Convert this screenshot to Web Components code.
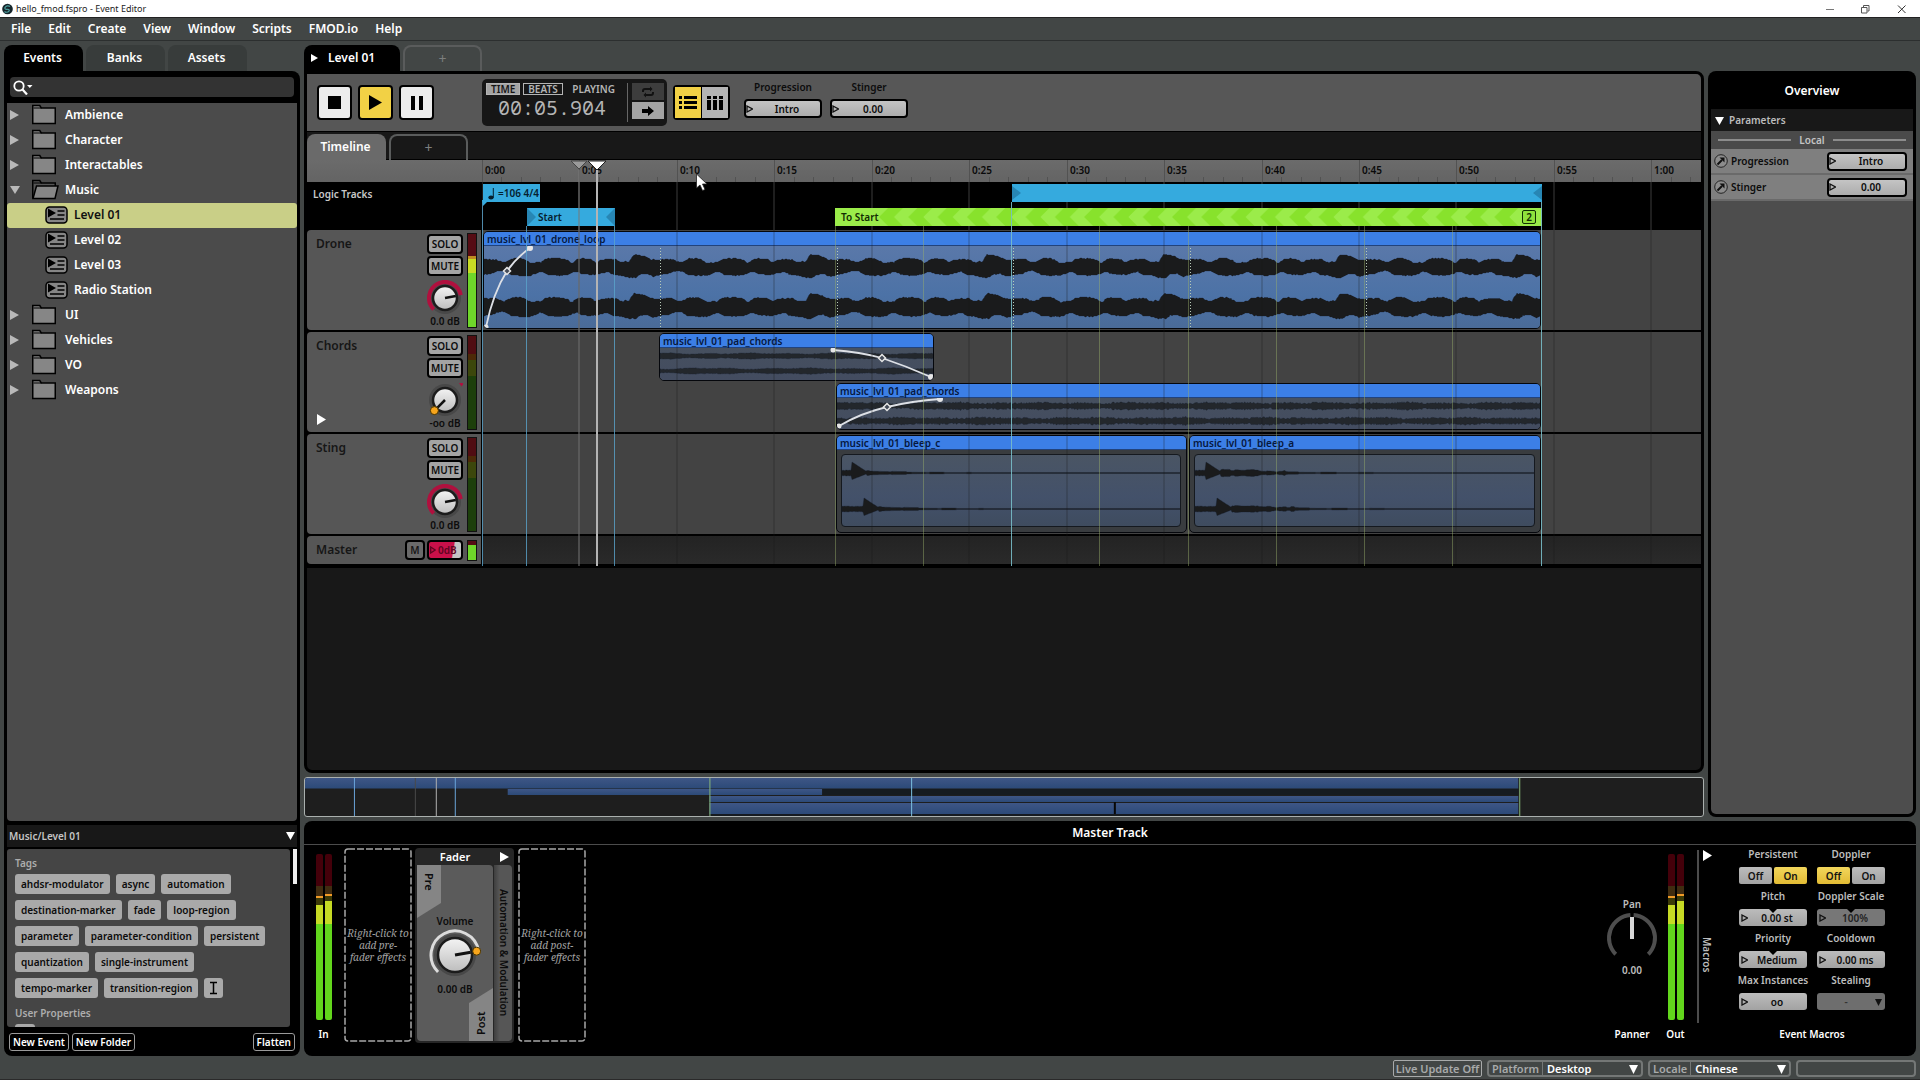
<!DOCTYPE html>
<html lang="en">
<head>
<meta charset="utf-8">
<title>hello_fmod.fspro - Event Editor</title>
<style>
  html, body { margin: 0; height: 100%; }
  body {
    background: #424645; color: #fff; overflow: hidden;
    font: 600 10px/16px "Noto Sans", "Open Sans", sans-serif;
    --black: #000; --panel: #4b4b4b; --bar: #181818; --clip: #3c7fe6; --marker: #35aade; --gold: #f2d145;
  }
</style>
</head>
<body>
<fm-app></fm-app>
<script>
const base = `
  *, *::before, *::after { box-sizing: border-box; }
  :host { display: block; box-sizing: border-box; }
  button, input, select { font: inherit; color: inherit; margin: 0; padding: 0; border: 0; background: none; border-radius: 0; appearance: none; min-width: 0; white-space: nowrap; }
  svg { display: block; }
  a { color: inherit; text-decoration: none; }
`;
function define(name, css, render, init) {
  customElements.define(name, class extends HTMLElement {
    connectedCallback() {
      if (this.shadowRoot) return;
      const root = this.attachShadow({ mode: 'open' });
      const t = document.createElement('template');
      t.innerHTML = `<style>${base}${css}</style>${render(k => this.getAttribute(k) ?? '', this)}`;
      root.append(t.content.cloneNode(true));
      if (init) init(this, root);
    }
  });
}
const range = n => Array.from({ length: n }, (_, i) => i);
const noise = i => { const v = Math.sin(i * 127.1 + 11.7) * 43758.5453; return v - Math.floor(v); };

/* ---------- window chrome ---------- */
define('fm-titlebar', `
  :host { display: flex; align-items: center; height: 18px; background: #fff; border-bottom: 1px solid #222; color: #222; padding: 0 14px 0 2px; font: 400 9px/16px "Noto Sans", "Open Sans", sans-serif; }
  .name { margin-left: 3px; flex: 1; }
  nav { display: flex; gap: 27px; }
  nav button { width: 9px; height: 10px; }
`, () => `
  <svg width="11" height="12" viewBox="0 0 11 12"><circle cx="5.500" cy="6" r="5.300" fill="#16252b"/><path d="M8 3.500a3.400 3.400 0 0 0-5 1c-.6 1.600.6 2 2.300 1.800s2.500.8 1.500 2S3.500 9.500 2.500 8.500" fill="none" stroke="#4ea0a0" stroke-width="1.200"/></svg>
  <span class="name">hello_fmod.fspro - Event Editor</span>
  <nav>
    <button aria-label="Minimize"><svg width="9" height="10"><path d="M1 5.500h8" stroke="#777"/></svg></button>
    <button aria-label="Restore"><svg width="9" height="10" fill="none" stroke="#555"><path d="M.5 3.500h5.500v5.500H.5zM2.500 3V1.500H8V7H6.500"/></svg></button>
    <button aria-label="Close"><svg width="9" height="10"><path d="M1 1.500l7.500 7.500M8.500 1.500L1 9" stroke="#333"/></svg></button>
  </nav>`);

define('fm-menubar', `
  :host { display: flex; gap: 17px; align-items: center; height: 23px; padding: 0 11px; border-bottom: 1px solid #2c2f2f; font-size: 12px; }
`, () => ['File', 'Edit', 'Create', 'View', 'Window', 'Scripts', 'FMOD.io', 'Help'].map(t => `<button>${t}</button>`).join(''));

define('fm-tab', `
  :host { flex: none; width: 79px; height: 26px; font-size: 12px; }
  button { display: flex; width: 100%; height: 100%; align-items: center; justify-content: center; gap: 10px; padding-right: 2px; border-radius: 8px 8px 0 0; background: #383c3b; }
  :host([kind=on]) button { background: #000; }
  :host([doc]) button { justify-content: flex-start; padding-left: 7px; }
  :host([kind=gray]) button { background: #6a6a6a; }
  :host([kind=add]) button { background: none; border: 2px solid #5a5c5c; border-bottom: 0; padding-right: 0; color: #7c7e7e; font-weight: 400; font-size: 14px; }
`, () => `<button><slot></slot></button>`);

/* ---------- event browser ---------- */
const folder = `<svg width="24" height="21" viewBox="0 0 24 21"><path d="M.75 19.500V1.500h7l1.500 2.500H23.250V19.500z" fill="#868686" stroke="#000" stroke-width="1.500"/><path d="M1.500 4h8" stroke="#000"/></svg>`;
const folderOpen = `<svg width="27" height="21" viewBox="0 0 27 21"><path d="M.75 19.500V1.500h7l1.500 2.500H23.250v4" fill="#555" stroke="#000" stroke-width="1.500"/><path d="M1.500 4h8" stroke="#000"/><path d="M1 19.500L4.500 7H26l-3 12.500z" fill="#868686" stroke="#000" stroke-width="1.500"/></svg>`;
const eventIcon = `<svg width="23" height="18" viewBox="0 0 23 18"><rect x="1" y="1" width="21" height="16" rx="3.500" fill="#868686" stroke="#000" stroke-width="1.500"/><path d="M3 2.500l8 4.500-8 4.500z"/><path d="M12.500 5h7M12.500 9h7M5 13h14" stroke="#000" stroke-width="1.500"/></svg>`;
define('fm-tree-row', `
  :host { display: flex; align-items: center; height: 25px; padding-left: 3px; font-size: 12px; }
  button { display: flex; align-items: center; height: 100%; width: 100%; text-align: left; padding-bottom: 2px; }
  .arrow { width: 22px; }
  .icon { width: 33px; }
  :host([leaf]) .arrow { width: 35px; }
  :host([leaf]) .icon { width: 29px; }
  :host([selected]) { background: #c9cf87; color: #111; border-radius: 3px; }
`, (a, el) => `<button><span class="arrow">${el.hasAttribute('leaf') ? '' : el.hasAttribute('open')
    ? '<svg width="10" height="9"><path d="M0 1h10L5 9z" fill="#b9b9b9"/></svg>'
    : '<svg width="9" height="10"><path d="M0 0l9 5-9 5z" fill="#b9b9b9"/></svg>'}</span>
  <span class="icon">${el.hasAttribute('leaf') ? eventIcon : el.hasAttribute('open') ? folderOpen : folder}</span><slot></slot></button>`);

define('fm-tag', `
  :host { height: 20px; padding: 0 6px; border-radius: 3px; background: #a9a9a9; color: #0c0c0c; line-height: 20px; }
`, () => `<slot></slot>`);

define('fm-browser', `
  :host { display: flex; flex-direction: column; width: 296px; flex: none; }
  .tabs { display: flex; gap: 3px; }
  .panel { flex: 1; min-height: 0; display: flex; flex-direction: column; background: #000; border-radius: 0 8px 8px 8px; padding: 6px 3px 5px; }
  .search { display: flex; align-items: center; gap: 6px; height: 20px; margin: 0 3px; padding: 0 3px; border-radius: 4px; background: #333; flex: none; }
  .search input { flex: 1; height: 100%; }
  .tree { flex: 1; min-height: 0; margin: 6px 0 4px; background: var(--panel); border-radius: 0 0 4px 4px; }
  .head { display: flex; justify-content: space-between; align-items: center; height: 22px; flex: none; padding: 0 2px; background: var(--bar); color: #c4c4c4; }
  .detail { display: flex; height: 178px; margin-top: 2px; overflow: hidden; flex: none; }
  .scroll { flex: 1; padding: 6px 8px 0; background: #454545; border-radius: 3px; color: #adadad; }
  .tags { display: flex; flex-wrap: wrap; gap: 6px; margin: 3px 16px 7px 0; }
  .thumb { width: 4px; height: 35px; margin-left: 3px; background: #eee; }
  .foot { display: flex; gap: 3px; margin: 6px 2px 0; flex: none; }
  .foot button { height: 18px; padding: 0 3px; border: 1px solid #9a9a9a; border-radius: 3px; line-height: 14px; }
  .foot .last { margin-left: auto; }
  h3 { margin: 0; font: inherit; }
  .stub { width: 20px; height: 20px; border-radius: 3px; background: #a9a9a9; margin-top: 3px; }
`, () => `
  <div class="tabs"><fm-tab kind="on">Events</fm-tab><fm-tab>Banks</fm-tab><fm-tab>Assets</fm-tab></div>
  <div class="panel">
    <div class="search"><label for="q" aria-label="Search"><svg width="20" height="15" viewBox="0 0 20 15"><circle cx="6" cy="6" r="4.700" fill="none" stroke="#fff" stroke-width="1.800"/><path d="M9.500 9.500l4.500 5" stroke="#fff" stroke-width="2.200"/><path d="M14 5h5.500l-2.700 3z" fill="#fff"/></svg></label><input id="q" type="text"></div>
    <div class="tree">
      <fm-tree-row>Ambience</fm-tree-row><fm-tree-row>Character</fm-tree-row><fm-tree-row>Interactables</fm-tree-row>
      <fm-tree-row open>Music</fm-tree-row>
      <fm-tree-row leaf selected>Level 01</fm-tree-row><fm-tree-row leaf>Level 02</fm-tree-row><fm-tree-row leaf>Level 03</fm-tree-row><fm-tree-row leaf>Radio Station</fm-tree-row>
      <fm-tree-row>UI</fm-tree-row><fm-tree-row>Vehicles</fm-tree-row><fm-tree-row>VO</fm-tree-row><fm-tree-row>Weapons</fm-tree-row>
    </div>
    <div class="head"><span>Music/Level 01</span><svg width="9" height="9"><path d="M0 0h9L4.500 8z" fill="#fff"/></svg></div>
    <div class="detail">
      <div class="scroll">
        <h3>Tags</h3>
        <div class="tags">${['ahdsr-modulator', 'async', 'automation', 'destination-marker', 'fade', 'loop-region', 'parameter', 'parameter-condition', 'persistent', 'quantization', 'single-instrument', 'tempo-marker', 'transition-region'].map(t => `<fm-tag>${t}</fm-tag>`).join('')}<fm-tag><svg width="7" height="20" viewBox="0 0 7 20" fill="none" stroke="#000" stroke-width="1.500"><path d="M0 4.500h7M0 15.500h7M3.500 4.500v11"/></svg></fm-tag></div>
        <h3>User Properties</h3>
        <div class="stub"></div>
      </div>
      <div class="thumb"></div>
    </div>
    <div class="foot"><button>New Event</button><button>New Folder</button><button class="last">Flatten</button></div>
  </div>`);

/* ---------- controls ---------- */
define('fm-field', `
  :host { display: flex; flex-direction: column; align-items: center; }
  label { line-height: 16px; white-space: nowrap; }
  .box { position: relative; width: 100%; color: #0c0c0c; }
  input { display: block; width: 100%; height: 19px; padding: 0 0 0 8px; text-align: center; border: 2px solid #000; border-radius: 4px; background: linear-gradient(#c4c4c4, #acacac); }
  svg { position: absolute; left: 2px; top: 50%; margin-top: -4px; }
  .notch { position: absolute; left: 50%; margin-left: -4px; top: 0; border: solid transparent; border-width: 4px 4px 0; border-top-color: #000; }
  :host([row]) { flex-direction: row; }
  :host([row]) label { flex: 1; }
  :host([row]) .box { width: 80px; }
  :host([deck]) label { color: #bdbdbd; margin-bottom: 5px; line-height: 16px; }
  :host([deck]) input { height: 17px; border: 0; border-radius: 3px; background: linear-gradient(#bcbcbc, #a2a2a2); }
  :host([disabled]) input { background: #777 !important; color: #222; }
`, (a, el) => `<label for="f">${a('label')}</label><div class="box"><input id="f" type="text" value="${a('value')}"><svg width="7" height="8"><path d="M1 1l5.500 3L1 7z" fill="none" stroke="#111" stroke-width="1.300"/></svg>${el.hasAttribute('notch') ? '<i class="notch"></i>' : ''}</div>`);

const polar = (c, r, deg) => { const t = (deg - 90) * Math.PI / 180; return [(c + r * Math.cos(t)).toFixed(2), (c + r * Math.sin(t)).toFixed(2)]; };
const arc = (c, r, a, b) => { const p = polar(c, r, a), q = polar(c, r, b); return `M${p}A${r} ${r} 0 ${b - a > 180 ? 1 : 0} 1 ${q}`; };
define('fm-knob', ``, a => {
  const big = a('size') === 'big', c = big ? 26 : 18, r = big ? 17 : 12, ar = big ? 24 : 16, v = +a('angle');
  const uid = big ? 'kb' : 'ks';
  return `<svg width="${2 * c}" height="${2 * c}" role="img" aria-label="knob">
    <defs><linearGradient id="${uid}" x2="0" y2="1"><stop stop-color="#f4f4f4"/><stop offset="1" stop-color="#bdbdbd"/></linearGradient></defs>
    <circle cx="${c}" cy="${c}" r="${r + 4}" fill="#484848"/>
    ${v > -135 ? `<path d="${arc(c, ar, -135, v)}" fill="none" stroke="${a('arc')}" stroke-width="${big ? 3 : 4}"/>` : `<path d="M32 1h5l-2.500 3.500z" fill="#b0103e"/>`}
    <circle cx="${c}" cy="${c}" r="${r}" fill="url(#${uid})" stroke="#1c1c1c" stroke-width="2.500"/>
    <path d="M${c} ${c}L${polar(c, r - 1, v)}" stroke="#111" stroke-width="${big ? 3 : 2.5}"/>
    ${a('dot') ? `<circle cx="${polar(c, big ? 22 : 15, v)[0]}" cy="${polar(c, big ? 22 : 15, v)[1]}" r="4" fill="#f7a51c" stroke="#4a3500"/>` : ''}
  </svg>`;
});

/* A column of coloured bands; each band is "colour height", the last one takes the rest. */
define('fm-meter', `
  :host { display: flex; flex-direction: column; width: 8px; outline: 1px solid #111; }
  i:last-child { flex: 1; }
`, a => a('bands').split(',').map(b => { const [c, h] = b.trim().split(' '); return `<i style="background:${c};${h ? `height:${h}px` : ''}"></i>`; }).join(''));

/* ---------- transport ---------- */
define('fm-transport', `
  :host { display: flex; align-items: flex-start; height: 58px; padding: 5px 10px 0; background: #575757; border-bottom: 1px solid #000; color: #0c0c0c; }
  .play { display: flex; gap: 6px; margin-top: 6px; }
  .play button { width: 35px; height: 35px; border: 2px solid #000; border-radius: 4px; background: #ececec; display: grid; place-items: center; }
  .play .on, .view .on { background: var(--gold); }
  .clock { display: flex; width: 185px; height: 47px; margin-left: 48px; padding: 4px 3px 0 4px; border-radius: 5px; background: #161616; color: #b4b4b4; }
  .read { flex: 1; }
  .modes { display: flex; gap: 3px; align-items: center; }
  .modes button { height: 12px; padding: 0 4px; line-height: 10px; border: 1px solid #b4b4b4; }
  .modes .on { background: #a4a4a4; color: #161616; }
  .modes span { margin-left: auto; padding-right: 12px; line-height: 12px; }
  .time { margin-left: 12px; font: 400 20px/26px "Noto Sans Mono", "Liberation Mono", monospace; }
  .side { display: flex; flex-direction: column; gap: 2px; padding-left: 4px; border-left: 1px solid #666; height: 39px; }
  .side button { width: 32px; height: 17px; background: #a4a4a4; display: grid; place-items: center; }
  .side button:first-child { background: #3d3d3d; }
  .view { display: flex; margin: 6px 14px 0 6px; border: 2px solid #000; border-radius: 4px; background: #000; gap: 1px; }
  .view button { width: 26px; height: 31px; background: #b4b4b4; display: grid; place-items: center; }
  fm-field { width: 78px; margin-right: 8px; gap: 4px; }
`, () => `
  <div class="play">
    <button aria-label="Stop"><svg width="13" height="13"><path d="M0 0h13v13H0z"/></svg></button>
    <button class="on" aria-label="Play"><svg width="13" height="15"><path d="M0 0l13 7.500L0 15z"/></svg></button>
    <button aria-label="Pause"><svg width="12" height="14"><path d="M0 0h4v14H0zM8 0h4v14H8z"/></svg></button>
  </div>
  <div class="clock">
    <div class="read">
      <div class="modes"><button class="on">TIME</button><button>BEATS</button><span>PLAYING</span></div>
      <div class="time">00:05.904</div>
    </div>
    <div class="side">
      <button aria-label="Loop"><svg width="12" height="12" fill="none" stroke="#111" stroke-width="2"><path d="M1 6V5q0-2 2-2h6M11 6v1q0 2-2 2H3"/><path d="M8 .5L10.500 3 8 5.500zM4 6.500L1.500 9 4 11.500z" fill="#111" stroke="none"/></svg></button>
      <button aria-label="Follow"><svg width="12" height="10"><path d="M0 3h6V0l6 5-6 5V7H0z"/></svg></button>
    </div>
  </div>
  <div class="view">
    <button class="on" aria-label="List view"><svg width="18" height="13"><path d="M0 0h3v3H0zM5 0h13v3H5zM0 5h3v3H0zM5 5h13v3H5zM0 10h3v3H0zM5 10h13v3H5z"/></svg></button>
    <button aria-label="Mixer view"><svg width="16" height="14"><path d="M0 0h4v3H0zM6 0h4v3H6zM12 0h4v3h-4zM0 4h4v10H0zM6 4h4v10H6zM12 4h4v10h-4z"/></svg></button>
  </div>
  <fm-field label="Progression" value="Intro"></fm-field>
  <fm-field label="Stinger" value="0.00"></fm-field>`);

/* ---------- tracks ---------- */
define('fm-track-head', `
  :host { display: flex; height: 100px; padding: 4px 5px 3px 9px; background: #565656; color: #0c0c0c; border-radius: 4px 0 0 4px; margin-bottom: 2px; flex: none; }
  .name { flex: 1; display: flex; flex-direction: column; justify-content: space-between; line-height: 20px; color: #161616; font-size: 12px; }
  .name svg { margin: 0 0 4px 1px; }
  .ctl { width: 36px; display: flex; flex-direction: column; gap: 2px; align-items: center; }
  .ctl button { width: 36px; height: 20px; border: 2px solid #000; border-radius: 4px; background: #a4a4a4; line-height: 14px; }
  .db { line-height: 12px; margin-top: -3px; white-space: nowrap; }
  fm-knob { margin-top: 2px; }
  fm-meter { margin-left: 5px; }
`, (a, el) => `
  <div class="name">${a('name')}${el.hasAttribute('fold') ? '<svg width="9" height="11"><path d="M0 0l9 5.500L0 11z" fill="#fff"/></svg>' : ''}</div>
  <div class="ctl"><button>SOLO</button><button>MUTE</button><fm-knob angle="${a('angle')}" arc="#b0103e" dot="${a('dot')}"></fm-knob><span class="db">${a('db')}</span></div>
  <fm-meter bands="${a('bands')}"></fm-meter>`);

define('fm-master-head', `
  :host { display: flex; align-items: center; gap: 2px; height: 28px; padding: 0 5px 0 9px; background: #565656; border-radius: 4px 0 0 4px; color: #161616; }
  .name { flex: 1; font-size: 12px; }
  button { width: 20px; height: 20px; border: 2px solid #000; border-radius: 4px; background: #6a6a6a; line-height: 14px; }
  .vol { display: flex; align-items: center; gap: 2px; padding-left: 1px; width: 36px; color: #5c0520; background: linear-gradient(100deg, #c9104a 72%, #c4c4c4 76%); }
  fm-meter { height: 19px; margin-left: 3px; }
`, () => `<span class="name">Master</span><button>M</button><button class="vol"><svg width="6" height="8"><path d="M.7 1l4.500 3L.7 7z" fill="none" stroke="#5c0520" stroke-width="1.300"/></svg>0dB</button><fm-meter bands="#560c14 4,#6fd62a"></fm-meter>`);

/* Outline of a stereo channel: list of [x, top, bottom] turned into one filled shape. */
function band(samples) {
  return 'M' + samples.map(([x, t]) => `${x} ${t.toFixed(1)}`).join('L') + 'L' + samples.slice().reverse().map(([x, , b]) => `${x} ${b.toFixed(1)}`).join('L') + 'Z';
}
const lerp = (pts, x) => { for (let i = 1; i < pts.length; i++) if (x <= pts[i][0]) { const [a, b] = pts[i - 1], [c, d] = pts[i]; return b + (d - b) * (x - a) / (c - a || 1); } return pts.at(-1)[1]; };
const DRONE_TOP = [[0,1],[12,1],[16,3],[20,4],[25,2],[29,0],[37,0],[42,2],[47,5],[52,4],[57,4],[61,1],[66,0],[76,0],[84,2],[87,5],[89,4],[93,1],[98,0],[107,1],[110,3],[112,4],[116,2],[122,1],[132,1],[135,3],[139,4],[142,3],[145,4],[147,0],[150,-4],[157,-3],[161,-2],[167,1],[177,2]];
const DRONE_BOT = [[0,17],[8,16],[13,14],[18,13],[22,14],[27,17],[36,18],[46,18],[52,16],[56,14],[60,15],[64,17],[76,18],[84,17],[89,15],[93,14],[97,16],[104,17],[112,17],[120,15],[124,14],[129,17],[138,18],[146,20],[152,20],[156,17],[163,16],[169,19],[177,17]];
function droneWave(w) {
  const P = 176.6, one = (y, s, k) => band(range(Math.ceil(w)).map(i => { const u = (i + (k ? P : 0)) % P, q = noise(i + k * 99); return [i, y + Math.round(lerp(DRONE_TOP, u) + q * .7), y + s + Math.round(lerp(DRONE_BOT, u) - q * .7)]; }));
  return one(12, 0, 0) + one(51, 2, 1);
}
function padWave(w, seed, amp) {
  const one = (y, k) => band(range(Math.ceil(w)).map(i => { const e = amp + .7 * Math.sin(i / 9 + k) * Math.sin(i / 23 + seed) + noise(i + seed * 31 + k * 7) * (seed > 1 ? 1.8 : .8); return [i, y - e, y + e]; }));
  return one(8, 1) + one(23, 4);
}
function bleepWave(w, rich) {
  const one = (y, at, k) => band(range(w).map(x => {
    let e = .5;
    if (x < at) e = 2.2 + noise(x + k) * .8;
    else if (x < at + 15) e = 11 - (x - at) * .65;
    else { const d = x - at; e = Math.max(.5, 2.8 * Math.exp(-d / (rich ? 75 : 50)) + (d < (rich ? 180 : 120) ? (Math.sin(d / 6) > .3 ? .4 : 0) : 0) + (rich && d < 80 ? noise(x >> 2) * 1.5 : 0)); }
    return [x, y - e, y + (x >= at && x < at + 15 ? e * .6 : e)]; }));
  return one(18, rich ? 11 : 10, 3) + one(54, 22, 8);
}
/* Clips sit on the lane by their start time, so they are placed on a free canvas. */
define('fm-clip', `
  :host { position: absolute; display: flex; flex-direction: column; border: 1px solid #05070c; border-radius: 5px; overflow: hidden; background: #434b58; }
  .title { height: 13px; flex: none; padding-left: 3px; line-height: 14px; background: var(--clip); color: #06183e; white-space: nowrap; border-bottom: 1px solid #22437c; box-sizing: content-box; }
  .body { flex: 1; min-height: 0; overflow: hidden; }
  :host([kind=drone]) .body { background: linear-gradient(#5a78a9, #4c72a6 60%, #4a6b98); }
  :host([kind=pad]) .body { background: linear-gradient(#46505f, #434c60); }
  :host([kind=bleep]) .body { margin: 4px 5px 5px 4px; border: 1px solid #15191f; border-radius: 4px; background: linear-gradient(#4a5564, #43516a 60%, #3f4c5f); }
  :host([kind=bleep]) { background: #393c3f; }
`, a => {
  const w = +a('w'), kind = a('kind');
  const wave = kind === 'drone' ? droneWave(w) : kind === 'pad' ? padWave(w, +a('seed'), 2) : bleepWave(w - 12, a('seed') === '2');
  const dashes = kind === 'drone' ? [176, 353, 529, 706, 882].map(x => `<path d="M${x}.5 2v80" stroke="#b8cbb8" stroke-dasharray="1 2"/>`).join('') : '';
  const pts = a('curve') ? a('curve').split(' ').map(p => p.split(',').map(Number)) : null;
  const curve = pts ? `<path d="M${pts[0]}Q${pts[3]} ${pts[1]}Q${pts[4]} ${pts[2]}" fill="none" stroke="#dde0e6" stroke-width="1.800"/><circle cx="${pts[0][0]}" cy="${pts[0][1]}" r="2.500" fill="#e6e6e6"/><circle cx="${pts[2][0]}" cy="${pts[2][1]}" r="3" fill="#e6e6e6"/><path d="M${pts[1][0]} ${pts[1][1] - 3.5}l3.500 3.500-3.500 3.500-3.500-3.500z" fill="#444b58" stroke="#e6e6e6" stroke-width="1.500"/>` : '';
  return `<div class="title">${a('name')}</div><div class="body"><svg width="${w}" height="84"><path d="${wave}" fill="${kind === 'pad' ? '#23272c' : '#1a1b1c'}" stroke="#14202f" stroke-width=".3"/>${dashes}${curve}</svg></div>`;
});

const PPS = 19.49;
const at = s => Math.round(s * PPS);
define('fm-ruler', `
  :host { position: relative; height: 22px; overflow: hidden; background: linear-gradient(#6b6b6b, #646464); color: #0a0a0a; line-height: 18px; flex: none; }
  span { position: absolute; top: 1px; }
  i { position: absolute; bottom: 0; width: 1px; height: 5px; background: #525252; }
  i.major { height: 22px; }
`, () => range(13).map(i => `<i class="major" style="left:${at(i * 5)}px"></i><span style="left:${at(i * 5) + 3}px">${Math.floor(i / 12)}:${String(i * 5 % 60).padStart(2, '0')}</span>`).join('')
  + range(63).map(i => `<i style="left:${at(i)}px"></i>`).join(''));

define('fm-timeline', `
  :host { display: flex; flex: none; background: #000; }
  .heads { width: 175px; padding-right: 1px; flex: none; }
  .corner { height: 22px; background: linear-gradient(#6b6b6b, #646464); margin-right: -1px; }
  .logic-name { height: 48px; padding: 4px 6px; color: #c8c8c8; }
  .canvas { position: relative; flex: 1; min-width: 0; overflow: hidden; }
  .logic { position: relative; height: 48px; }
  .lane { position: relative; height: 100px; margin-bottom: 2px; background: #434343; }
  .lane.master { height: 28px; background: linear-gradient(#232323, #2a2a2a); }
  .mark { position: absolute; height: 18px; padding: 0 8px; line-height: 18px; background: var(--marker); color: #06202e; white-space: nowrap; }
  .tempo { display: flex; align-items: center; gap: 3px; padding: 0 0 0 5px; }
  .trans { background: #9bec4a; color: #122c02; padding-left: 6px; }
  .trans svg, .lines, .grid { position: absolute; left: 0; top: 0; }
  .trans svg { left: 44px; }
  .count { position: absolute; right: 6px; top: 2px; width: 14px; height: 14px; border: 1px solid #123004; border-radius: 2px; text-align: center; line-height: 12px; background: #8fe23c; }
  .lines { pointer-events: none; }
`, () => {
  const grid = (y, h, o) => range(13).map(i => `<path d="M${at(i * 5)} ${y}v${h}" stroke="${o}" stroke-width="2"/>`).join('');
  const on = '#560c14 22,#c08a20 3,#c8dc24 14,#6fd62a', off = '#500d12 18,#4d2a08 6,#3c470c 16,#1d3f0b';
  return `
  <div class="heads">
    <div class="corner"></div><div class="logic-name">Logic Tracks</div>
    <fm-track-head name="Drone" angle="80" db="0.0 dB" bands="${on}"></fm-track-head>
    <fm-track-head name="Chords" fold angle="-135" dot="1" db="-oo dB" bands="${off}"></fm-track-head>
    <fm-track-head name="Sting" angle="80" db="0.0 dB" bands="${off}"></fm-track-head>
    <fm-master-head></fm-master-head>
  </div>
  <div class="canvas">
    <fm-ruler></fm-ruler>
    <div class="logic">
      <svg class="grid" width="1240" height="48">${grid(0, 48, '#1e1e1e')}</svg>
      <div class="mark tempo" style="left:1px;top:2px;width:57px"><svg width="7" height="13"><ellipse cx="3" cy="10.500" rx="2.700" ry="2" fill="#06202e"/><path d="M5.300 1v9.500" stroke="#06202e"/></svg>=106 4/4</div>
      <div class="mark" style="left:45px;top:26px;width:88px;padding-left:11px">Start<svg style="position:absolute;inset:0" width="88" height="18" fill="#2786b4"><path d="M0 0l9 9-9 9zM88 0l-9 9 9 9z"/></svg></div>
      <div class="mark" style="left:530px;top:2px;width:530px"><svg style="position:absolute;inset:0" width="530" height="18" fill="#2786b4"><path d="M0 2l9 7-9 7zM530 2l-9 7 9 7z"/></svg></div>
      <div class="mark trans" style="left:353px;top:26px;width:707px">To Start
        <svg width="640" height="18"><defs><pattern id="chev" width="29.300" height="18" patternUnits="userSpaceOnUse"><path d="M0 9L9 0H24L15 9l9 9H9z" fill="#88e22c"/></pattern></defs><path d="M0 0h640v18H0z" fill="url(#chev)"/></svg><span class="count">2</span></div>
    </div>
    <div class="lane"><fm-clip kind="drone" name="music_lvl_01_drone_loop" w="1059" style="left:1px;top:1px;width:1058px;height:98px" curve="2,81 23,25 46,2 9,47 33,11"></fm-clip></div>
    <div class="lane">
      <fm-clip kind="pad" seed="1" name="music_lvl_01_pad_chords" w="275" style="left:177px;top:1px;width:275px;height:48px" curve="173,2 222,10 271,29 200,4 246,18"></fm-clip>
      <fm-clip kind="pad" seed="2" name="music_lvl_01_pad_chords" w="706" style="left:354px;top:51px;width:705px;height:47px" curve="2,28 50,9 103,1 24,15 75,3"></fm-clip>
    </div>
    <div class="lane">
      <fm-clip kind="bleep" seed="1" name="music_lvl_01_bleep_c" w="352" style="left:354px;top:1px;width:351px;height:98px"></fm-clip>
      <fm-clip kind="bleep" seed="2" name="music_lvl_01_bleep_a" w="353" style="left:707px;top:1px;width:352px;height:98px"></fm-clip>
    </div>
    <div class="lane master"></div>
    <svg class="lines" width="1240" height="408">
      ${grid(70, 334, 'rgba(20,20,20,.18)')}
      <path d="M97 10v396" stroke="#777" stroke-width="2" stroke-opacity=".5"/>
      <path d="M.5 40v366M44.500 66v340M132.500 66v340" stroke="#5aa4cc" stroke-opacity=".8"/>
      <path d="M529.500 42v364M1059.500 42v364" stroke="#78bcc8" stroke-opacity=".9"/>
      ${[353, 441, 617, 706, 794, 882, 970].map(x => `<path d="M${x}.5 66v340" stroke="#9ab06a" stroke-opacity=".45"/>`).join('')}
      <path d="M0 40h7L1 46z" fill="#35aade"/>
      <path d="M115 8v398" stroke="#b4b4b4" stroke-width="2"/>
      <path d="M89 1h16l-8 8z" fill="#9a9a9a" stroke="#444"/>
      <path d="M106 1h18l-9 9z" fill="#fff" stroke="#222"/>
      <path d="M214.500 14v14l3.500-3 2.500 5.500 2.500-1-2.500-5.500h4.500z" fill="#fff" stroke="#222" stroke-width=".8"/>
    </svg>
  </div>`;
});

define('fm-minimap', `
  :host { height: 40px; margin-top: 4px; border: 1px solid #aab0ae; border-radius: 3px; background: #1e1e1e; flex: none; overflow: hidden; }
  svg { width: 100%; height: 100%; }
`, () => `<svg viewBox="0 0 1400 38" preserveAspectRatio="none">
  <defs><linearGradient id="b" x2="0" y2="1"><stop stop-color="#3e5686"/><stop offset="1" stop-color="#2c4a78"/></linearGradient></defs>
  <g fill="url(#b)"><path d="M0 0h1215v10.500H0z"/><path d="M203 11h315v6H203z"/><path d="M405 18h810v6H405z"/><path d="M405 25h810v11H405z"/></g>
  <path d="M518 11h697v6H518zM405 36h810v2H405z" fill="#161b20"/><path d="M811 24v12" stroke="#080808" stroke-width="2"/>
  <path d="M49.500 0v38M150.500 0v38" stroke="#6aa6dc"/><path d="M607.500 0v38" stroke="#7cc0e0"/><path d="M110.500 0v38" stroke="#4a4a4a"/><path d="M131.500 0v38" stroke="#b0b0b0"/><path d="M405.500 0v38M1216.500 0v38" stroke="#88b878"/>
</svg>`);

define('fm-editor', `
  :host { display: flex; flex-direction: column; flex: 1; min-width: 0; }
  .tabs { display: flex; gap: 3px; flex: none; }
  .tabs fm-tab:first-child { width: 96px; }
  .panel { flex: 1; min-height: 0; display: flex; flex-direction: column; border: 3px solid #000; border-radius: 0 8px 8px 8px; background: var(--bar); overflow: hidden; }
  .sheets { display: flex; gap: 3px; height: 28px; padding-top: 2px; flex: none; border-bottom: 1px solid #000; }
  .sheets fm-tab:first-child { margin-bottom: -1px; }
  .end { height: 2px; background: #000; }
`, () => `
  <div class="tabs"><fm-tab kind="on" doc><svg width="7" height="8"><path d="M0 0l7 4-7 4z" fill="#fff"/></svg>Level 01</fm-tab><fm-tab kind="add">+</fm-tab></div>
  <div class="panel">
    <fm-transport></fm-transport>
    <div class="sheets"><fm-tab kind="gray">Timeline</fm-tab><fm-tab kind="add">+</fm-tab></div>
    <fm-timeline></fm-timeline><div class="end"></div>
  </div>
  <fm-minimap></fm-minimap>`);

/* ---------- overview ---------- */
define('fm-overview', `
  :host { width: 208px; flex: none; display: flex; flex-direction: column; margin-top: 26px; padding: 0 3px 3px; background: #000; border-radius: 8px; }
  h2 { margin: 0; height: 38px; font: 600 12px/40px "Noto Sans", sans-serif; text-align: center; }
  .head { display: flex; align-items: center; gap: 5px; height: 22px; padding-left: 4px; background: var(--bar); color: #bcbcbc; }
  .local { display: flex; align-items: center; gap: 8px; height: 18px; padding: 0 7px; background: #4a4a4a; color: #c4c4c4; }
  .local i { flex: 1; height: 2px; background: #8c8c8c; }
  .row { display: flex; align-items: center; gap: 3px; height: 26px; padding: 0 6px 0 3px; background: #7f7f7f; border-bottom: 2px solid #6a6a6a; color: #0c0c0c; }
  .row fm-field { flex: 1; }
  .rest { flex: 1; background: #4d4d4d; border-radius: 0 0 5px 5px; }
`, () => { const ic = '<svg width="14" height="14"><circle cx="7" cy="7" r="6.300" fill="#8c8c8c" stroke="#222"/><path d="M3.500 10.500L8 6" stroke="#111" stroke-width="2"/><path d="M5.500 3.500h5v5z" fill="#111"/></svg>';
  return `<h2>Overview</h2><div class="head"><svg width="9" height="9"><path d="M0 1h9L4.500 9z" fill="#fff"/></svg>Parameters</div>
  <div class="local"><i></i>Local<i></i></div>
  <div class="row">${ic}<fm-field row label="Progression" value="Intro"></fm-field></div>
  <div class="row">${ic}<fm-field row label="Stinger" value="0.00"></fm-field></div><div class="rest"></div>`; });

/* ---------- deck ---------- */
define('fm-level', `
  :host { display: flex; flex-direction: column; align-items: center; }
  .bars { display: flex; gap: 2px; height: 166px; margin-bottom: 6px; }
  fm-meter { width: 7px; outline: 0; border-radius: 2px; overflow: hidden; }
`, () => `<div class="bars"><fm-meter bands="#44000a 32,#402c10 10,#f09a28 2,#3c3a08 7,#c6da24 19,#62d61c"></fm-meter><fm-meter bands="#44000a 32,#402c10 8,#f09a28 2,#3c3a08 5,#c6da24 23,#62d61c"></fm-meter></div><slot></slot>`);

define('fm-drop', `
  :host { display: grid; place-items: center; align-self: flex-start; position: relative; width: 68px; height: 194px; color: #a0a0a0; text-align: center; font: italic 400 10px/12px "Noto Serif", "DejaVu Serif", "Liberation Serif", serif; }
  svg { position: absolute; inset: 0; }
  p { margin: 0; }
`, () => `<svg width="68" height="194"><rect x="1" y="1" width="66" height="192" rx="3" fill="none" stroke="#a8a8a8" stroke-width="1.500" stroke-dasharray="7 2"/></svg><p><slot></slot></p>`);

define('fm-fader', `
  :host { width: 99px; height: 195px; background: #262626; border-radius: 4px; color: #0c0c0c; padding: 0 2px 2px; }
  header { display: flex; height: 17px; color: #fff; font-size: 11px; line-height: 15px; align-items: center; }
  header span { width: 76px; text-align: center; }
  header i { margin-left: 7px; }
  .row { display: flex; height: 176px; }
  .main { position: relative; width: 76px; background: #5b5b5b; border-radius: 4px; display: flex; flex-direction: column; align-items: center; padding-top: 48px; }
  .tag { position: absolute; width: 24px; background: #858585; writing-mode: vertical-rl; font-size: 11px; line-height: 24px; }
  .pre { left: 0; top: 0; height: 53px; padding-top: 8px; clip-path: polygon(0 0, 100% 0, 100% 38px, 0 53px); }
  .post { right: 0; bottom: 0; height: 53px; padding-top: 6px; transform: rotate(180deg); clip-path: polygon(0 0, 100% 0, 100% 38px, 0 53px); }
  .auto { flex: 1; background: linear-gradient(90deg, #3f3f3f, #565656 30%); border-radius: 0 4px 4px 0; writing-mode: vertical-rl; text-align: center; line-height: 16px; margin-left: 1px; }
`, () => `<header><span>Fader</span><i><svg width="9" height="10"><path d="M0 0l9 5-9 5z" fill="#fff"/></svg></i></header>
  <div class="row"><div class="main"><span class="tag pre">Pre</span><span>Volume</span><fm-knob size="big" angle="80" arc="#dcdcdc" dot="1"></fm-knob><span>0.00 dB</span><span class="tag post">Post</span></div><div class="auto">Automation &amp; Modulation</div></div>`);

define('fm-toggle', `
  :host { display: flex; flex-direction: column; align-items: center; color: #bdbdbd; }
  span { line-height: 16px; margin-bottom: 5px; }
  div { display: flex; gap: 2px; width: 100%; height: 17px; color: #111; }
  button { flex: 1; border-radius: 2px; background: linear-gradient(#bcbcbc, #a2a2a2); line-height: 16px; }
  .on { background: linear-gradient(#f2d65c, #e2bb34); }
`, a => `<span>${a('label')}</span><div><button class="${a('value') === 'Off' ? 'on' : ''}">Off</button><button class="${a('value') === 'On' ? 'on' : ''}">On</button></div>`);

define('fm-choice', `
  :host { display: flex; flex-direction: column; align-items: center; color: #bdbdbd; }
  label { line-height: 16px; margin-bottom: 5px; }
  div { position: relative; width: 100%; }
  select { display: block; width: 100%; height: 17px; border-radius: 3px; background: #6e6e6e; color: #333; text-align: center; text-align-last: center; padding-right: 10px; }
  svg { position: absolute; right: 3px; top: 6px; }
`, a => `<label for="s">${a('label')}</label><div><select id="s"><option>${a('value')}</option></select><svg width="7" height="7"><path d="M0 0h7L3.500 7z" fill="#111"/></svg></div>`);

define('fm-deck', `
  :host { height: 235px; margin-top: 4px; background: #000; border-radius: 8px; flex: none; }
  h2 { margin: 0; height: 24px; border-bottom: 1px solid #4c4c4c; font: 600 12px/23px "Noto Sans", sans-serif; text-align: center; }
  .body { display: flex; padding: 3px 31px 0 12px; }
  fm-level { padding-top: 6px; width: 15px; }
  .pre { margin: 0 3px 0 13px; }
  .post { margin-left: 4px; }
  .grow { flex: 1; }
  .pan { width: 60px; display: flex; flex-direction: column; align-items: center; padding-top: 48px; color: #bdbdbd; margin-right: 6px; }
  .pan b { margin-top: 48px; color: #fff; font-weight: 600; }
  .split { width: 2px; height: 173px; background: #4c4c4c; margin: 2px 4px 0 14px; }
  .macro-tab { width: 12px; display: flex; flex-direction: column; align-items: flex-start; color: #bdbdbd; padding-top: 2px; }
  .macro-tab span { writing-mode: vertical-rl; line-height: 8px; margin-top: 76px; }
  .macros { width: 146px; margin-left: 24px; text-align: center; }
  .grid { display: grid; grid-template-columns: 68px 68px; column-gap: 10px; row-gap: 4px; margin-top: -2px; }
  .macros > b { display: block; margin-top: 16px; font-weight: 600; }
`, () => `<h2>Master Track</h2>
  <div class="body">
    <fm-level>In</fm-level><fm-drop class="pre">Right-click to add pre-<br>fader effects</fm-drop><fm-fader></fm-fader><fm-drop class="post">Right-click to add post-<br>fader effects</fm-drop>
    <div class="grow"></div>
    <div class="pan"><span>Pan</span>
      <svg width="52" height="50"><path d="${arc(26, 23, -135, -4)}${arc(26, 23, 4, 135)}" fill="none" stroke="#4e4e4e" stroke-width="4"/><path d="M26 5v22" stroke="#d8d8d8" stroke-width="4"/></svg>
      <span>0.00</span><b>Panner</b></div>
    <fm-level>Out</fm-level><div class="split"></div>
    <div class="macro-tab"><svg width="9" height="11"><path d="M0 0l9 5.500L0 11z" fill="#fff"/></svg><span>Macros</span></div>
    <div class="macros"><div class="grid">
      <fm-toggle label="Persistent" value="On"></fm-toggle><fm-toggle label="Doppler" value="Off"></fm-toggle>
      <fm-field deck notch label="Pitch" value="0.00 st"></fm-field><fm-field deck notch disabled label="Doppler Scale" value="100%"></fm-field>
      <fm-field deck notch label="Priority" value="Medium"></fm-field><fm-field deck label="Cooldown" value="0.00 ms"></fm-field>
      <fm-field deck label="Max Instances" value="oo"></fm-field><fm-choice label="Stealing" value="-"></fm-choice>
    </div><b>Event Macros</b></div>
  </div>`);

/* ---------- status bar ---------- */
define('fm-status', `
  :host { display: flex; justify-content: flex-end; gap: 5px; height: 24px; padding: 4px 4px 2px; border-bottom: 1px solid #2a2a2a; color: #a8aaaa; font-size: 11px; }
  button { width: 89px; border: 1px solid #a8aaaa; border-radius: 2px; line-height: 14px; }
  .pick { position: relative; display: flex; width: 156px; border: 2px solid #747776; border-radius: 4px; line-height: 14px; }
  .pick.loc { width: 143px; }
  label { padding: 0 3px; border-right: 1px solid #747776; }
  select { flex: 1; padding-left: 4px; color: #fff; }
  .pick svg { position: absolute; right: 3px; top: 3px; pointer-events: none; }
  .blank { width: 120px; border: 2px solid #747776; border-radius: 4px; }
`, () => { const v = '<svg width="9" height="9"><path d="M0 0h9L4.500 9z" fill="#fff"/></svg>'; return `
  <button>Live Update Off</button>
  <div class="pick"><label for="p">Platform</label><select id="p"><option>Desktop</option></select>${v}</div>
  <div class="pick loc"><label for="l">Locale</label><select id="l"><option>Chinese</option></select>${v}</div>
  <div class="blank"></div>`; });

define('fm-app', `
  :host { display: flex; flex-direction: column; height: 100vh; min-height: 700px; }
  main { flex: 1; min-height: 0; display: flex; gap: 4px; padding: 4px 4px 0; }
  .work { flex: 1; min-width: 0; display: flex; flex-direction: column; }
  .top { flex: 1; min-height: 0; display: flex; gap: 4px; }
`, () => `<fm-titlebar></fm-titlebar><fm-menubar></fm-menubar>
  <main><fm-browser></fm-browser><div class="work"><div class="top"><fm-editor></fm-editor><fm-overview></fm-overview></div><fm-deck></fm-deck></div></main>
  <fm-status></fm-status>`);
</script>
</body>
</html>
